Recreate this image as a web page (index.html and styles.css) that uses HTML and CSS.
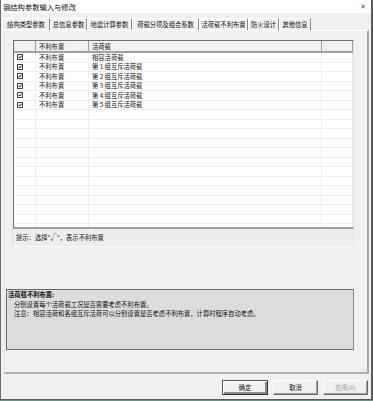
FILE: index.html
```html
<!doctype html>
<html>
<head>
<meta charset="UTF-8">
<title>钢结构参数输入与修改</title>
<link rel="stylesheet" href="styles.css">
</head>
<body>
<div class="win">
  <div class="titlebar">
    <span class="title">钢结构参数输入与修改</span>
    <span class="close">✕</span>
  </div>
  <div class="content">
    <div class="tabs">
      <span class="tab" style="width:48px">结构类型参数</span>
      <span class="tab" style="width:37px">总信息参数</span>
      <span class="tab" style="width:45px">地震计算参数</span>
      <span class="tab" style="width:67px">荷载分项及组合系数</span>
      <span class="tab sel" style="width:49px">活荷载不利布置</span>
      <span class="tab" style="width:31px">防火设计</span>
      <span class="tab" style="width:32px">其他信息</span>
    </div>
    <div class="panel">
      <div class="grid">
        <div class="row head">
          <span class="c1"></span><span class="c2">不利布置</span><span class="c3">活荷载</span><span class="c4"></span>
        </div>
        <div class="row"><span class="c1"><svg class="chk" width="6" height="6" viewBox="0 0 6 6"><rect x="0.5" y="0.5" width="5" height="5" fill="#fff" stroke="#444"/><polyline points="1.5,2.9 2.6,4.1 4.6,1.7" fill="none" stroke="#000" stroke-width="1"/></svg></span><span class="c2">不利布置</span><span class="c3">相容活荷载</span><span class="c4"></span></div>
        <div class="row"><span class="c1"><svg class="chk" width="6" height="6" viewBox="0 0 6 6"><rect x="0.5" y="0.5" width="5" height="5" fill="#fff" stroke="#444"/><polyline points="1.5,2.9 2.6,4.1 4.6,1.7" fill="none" stroke="#000" stroke-width="1"/></svg></span><span class="c2">不利布置</span><span class="c3">第 1 组互斥活荷载</span><span class="c4"></span></div>
        <div class="row"><span class="c1"><svg class="chk" width="6" height="6" viewBox="0 0 6 6"><rect x="0.5" y="0.5" width="5" height="5" fill="#fff" stroke="#444"/><polyline points="1.5,2.9 2.6,4.1 4.6,1.7" fill="none" stroke="#000" stroke-width="1"/></svg></span><span class="c2">不利布置</span><span class="c3">第 2 组互斥活荷载</span><span class="c4"></span></div>
        <div class="row"><span class="c1"><svg class="chk" width="6" height="6" viewBox="0 0 6 6"><rect x="0.5" y="0.5" width="5" height="5" fill="#fff" stroke="#444"/><polyline points="1.5,2.9 2.6,4.1 4.6,1.7" fill="none" stroke="#000" stroke-width="1"/></svg></span><span class="c2">不利布置</span><span class="c3">第 3 组互斥活荷载</span><span class="c4"></span></div>
        <div class="row"><span class="c1"><svg class="chk" width="6" height="6" viewBox="0 0 6 6"><rect x="0.5" y="0.5" width="5" height="5" fill="#fff" stroke="#444"/><polyline points="1.5,2.9 2.6,4.1 4.6,1.7" fill="none" stroke="#000" stroke-width="1"/></svg></span><span class="c2">不利布置</span><span class="c3">第 4 组互斥活荷载</span><span class="c4"></span></div>
        <div class="row"><span class="c1"><svg class="chk" width="6" height="6" viewBox="0 0 6 6"><rect x="0.5" y="0.5" width="5" height="5" fill="#fff" stroke="#444"/><polyline points="1.5,2.9 2.6,4.1 4.6,1.7" fill="none" stroke="#000" stroke-width="1"/></svg></span><span class="c2">不利布置</span><span class="c3">第 5 组互斥活荷载</span><span class="c4"></span></div>
        <div class="row"><span class="c1"></span><span class="c2"></span><span class="c3"></span><span class="c4"></span></div>
        <div class="row"><span class="c1"></span><span class="c2"></span><span class="c3"></span><span class="c4"></span></div>
        <div class="row"><span class="c1"></span><span class="c2"></span><span class="c3"></span><span class="c4"></span></div>
        <div class="row"><span class="c1"></span><span class="c2"></span><span class="c3"></span><span class="c4"></span></div>
        <div class="row"><span class="c1"></span><span class="c2"></span><span class="c3"></span><span class="c4"></span></div>
        <div class="row"><span class="c1"></span><span class="c2"></span><span class="c3"></span><span class="c4"></span></div>
        <div class="row"><span class="c1"></span><span class="c2"></span><span class="c3"></span><span class="c4"></span></div>
        <div class="row"><span class="c1"></span><span class="c2"></span><span class="c3"></span><span class="c4"></span></div>
        <div class="row"><span class="c1"></span><span class="c2"></span><span class="c3"></span><span class="c4"></span></div>
        <div class="row"><span class="c1"></span><span class="c2"></span><span class="c3"></span><span class="c4"></span></div>
        <div class="row"><span class="c1"></span><span class="c2"></span><span class="c3"></span><span class="c4"></span></div>
        <div class="row"><span class="c1"></span><span class="c2"></span><span class="c3"></span><span class="c4"></span></div>
        <div class="row"><span class="c1"></span><span class="c2"></span><span class="c3"></span><span class="c4"></span></div>
        <div class="row"><span class="c1"></span><span class="c2"></span><span class="c3"></span><span class="c4"></span></div>
      </div>
      <div class="hint">提示：选择"√"，表示不利布置</div>
      <div class="desc">
        <div class="desc-title">活荷载不利布置:</div>
        <div class="desc-line">分别设置每个活荷载工况是否需要考虑不利布置。</div>
        <div class="desc-line">注意：相容活荷和各组互斥活荷可以分别设置是否考虑不利布置，计算时程序自动考虑。</div>
      </div>
    </div>
    <div class="buttons">
      <span class="btn default">确定</span>
      <span class="btn">取消</span>
      <span class="btn disabled">应用(A)</span>
    </div>
  </div>
</div>
</body>
</html>
```

FILE: styles.css
```css
* {
    box-sizing: border-box;
}
html, body {
    margin: 0;
    padding: 0;
}
body {
    width: 373px;
    height: 401px;
    overflow: hidden;
    background: #6f8f86;
    font-family: "Noto Sans CJK SC", "Noto Sans", sans-serif;
    font-size: 6.3px;
    color: #111;
}
.win {
    width: 373px;
    height: 400px;
    background: #f0f0f0;
    border-left: 1px solid #6b6b6b;
    border-right: 2px solid #5a5a5a;
    border-bottom: 1px solid #5a5a5a;
    display: flex;
    flex-direction: column;
}
.titlebar {
    height: 13px;
    background: #fff;
    display: flex;
    align-items: center;
    justify-content: space-between;
    padding: 0 5px 0 2px;
}
.title {
    font-size: 7.3px;
}
.close {
    font-family: "DejaVu Sans", sans-serif;
    font-size: 7px;
    color: #555;
}
.content {
    flex: 1;
    display: flex;
    flex-direction: column;
    padding: 5px 2px 0 3px;
}
.tabs {
    display: flex;
    height: 12px;
    margin-left: -2px;
}
.tab {
    display: flex;
    align-items: center;
    justify-content: center;
    height: 12px;
    white-space: nowrap;
    border-top: 1px solid #fff;
    border-left: 1px solid #fff;
    border-right: 1px solid #8c8c8c;
}
.tab.sel {
    background: #f7f7f7;
}
.panel {
    height: 344px;
    border-top: 1px solid #fff;
    border-left: 1px solid #e2e2e2;
    border-right: 2px solid #a8a8a8;
    border-bottom: 2px solid #b0b0b0;
    padding: 9px 0 0 8px;
}
.grid {
    width: 341px;
    height: 189px;
    background: #fff;
    overflow: hidden;
    border-top: 1px solid #6d6d6d;
    border-left: 1px solid #6d6d6d;
    border-right: 1px solid #e3e3e3;
    border-bottom: 2px solid #a0a0a0;
}
.row {
    display: flex;
    height: 9.5px;
    border-bottom: 1px solid #efefef;
}
.row span {
    display: flex;
    align-items: center;
    height: 100%;
    border-right: 1px solid #efefef;
    white-space: nowrap;
    padding-left: 3px;
}
.row.head {
    height: 12px;
    background: #f0f0f0;
    border-bottom: 2px solid #a0a0a0;
}
.row.head span {
    border-right-color: #a0a0a0;
}
.c1 {
    width: 22px;
}
.row .c1 {
    padding-left: 3px;
}
.c2 {
    width: 53px;
}
.c3 {
    width: 233px;
}
.c4 {
    flex: 1;
}
.chk {
    display: block;
}
.hint {
    width: 342px;
    height: 18px;
    margin-left: -1px;
    padding-left: 3px;
    display: flex;
    align-items: center;
    background: #ededed;
    border-left: 1px solid #dcdcdc;
    border-right: 1px solid #e6e6e6;
    border-bottom: 1px solid #fafafa;
}
.desc {
    width: 348px;
    height: 61px;
    margin-top: 42px;
    margin-left: -7px;
    background: #dcdcdc;
    border: 1px solid #6a6a6a;
    border-right-color: #8e8e8e;
    padding: 0 1px;
    line-height: 9.5px;
}
.desc-title {
    font-weight: bold;
}
.desc-line {
    padding-left: 6px;
    white-space: nowrap;
}
.buttons {
    display: flex;
    justify-content: flex-end;
    gap: 5px;
    margin-top: 6px;
    margin-right: 1px;
}
.btn {
    width: 45px;
    height: 15px;
    display: flex;
    align-items: center;
    justify-content: center;
    background: #f0f0f0;
    border: 1px solid;
    border-color: #fff #696969 #696969 #fff;
    box-shadow: inset -1px -1px #a0a0a0;
}
.btn.default {
    width: 46px;
    border-color: #555 #333 #333 #555;
    box-shadow: inset 1px 1px #fff, inset -2px -2px #8a8a8a;
}
.btn.disabled {
    color: #a0a0a0;
}
```
